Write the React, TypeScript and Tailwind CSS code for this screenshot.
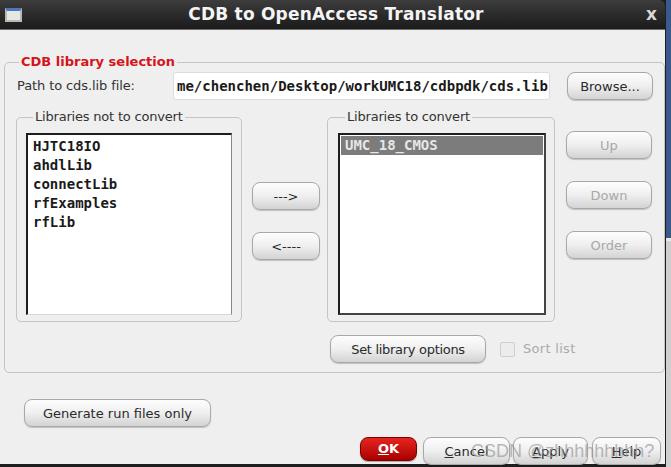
import React from 'react';

const Btn: React.FC<{ children: React.ReactNode; className?: string; disabled?: boolean }> = ({
    children,
    className = '',
    disabled,
}) => (
    <button
        className={`h-[28px] shrink-0 rounded-[8px] border border-[#a8a8a8] bg-linear-to-b from-[#fdfdfd] via-[#efefef] to-[#d3d3d3] shadow-[0_1px_1px_rgba(0,0,0,0.2)] text-[13px] leading-none ${disabled ? 'text-[#a8a8a8]' : 'text-[#2a2a2a]'} ${className}`}
    >
        {children}
    </button>
);

const libsLeft = ['HJTC18IO', 'ahdlLib', 'connectLib', 'rfExamples', 'rfLib'];

export default function App() {
    return (
        <div className="flex h-[467px] w-[671px] overflow-hidden bg-[#c8c8c8] font-['DejaVu_Sans',sans-serif]">
            {/* Window */}
            <div className="flex h-[467px] w-[666px] shrink-0 flex-col border-r border-[#1e1e1e] bg-[#1e1e1e]">
                {/* Title bar */}
                <div className="relative flex h-[30px] shrink-0 items-center rounded-tr-[6px] border-b border-[#6b6b6b] bg-linear-to-b from-[#3d3d3d] to-[#1b1b1b]">
                    <div className="ml-[5px] h-[14px] w-[17px] border-2 border-[#b9b9b9] border-t-[3px] border-t-[#4a78c0] bg-[#e8e8e0]" />
                    <div className="flex-1 pl-[4px] text-center text-[17px] font-bold tracking-[0.2px] text-[#f4f4f4]">
                        CDB to OpenAccess Translator
                    </div>
                    <div className="mr-[8px] text-[17px] font-bold text-[#d8d8d8]">x</div>
                </div>

                {/* Body */}
                <div className="relative flex h-[434px] flex-col bg-[#efefef] px-[4px] pt-[24px] text-[13px] text-[#333]">
                    <fieldset className="w-[660px] rounded-[5px] border border-[#c4c4c4] px-[11px] pb-[9px]">
                        <legend className="ml-[3px] px-[2px] text-[13px] font-bold leading-[16px] text-[#d5141b]">
                            CDB library selection
                        </legend>

                        {/* Path row */}
                        <div className="mt-[2px] flex h-[28px] items-center">
                            <span className="w-[157px] shrink-0 pl-[1px] tracking-[-0.1px]">Path to cds.lib file:</span>
                            <div className="flex h-[28px] w-[377px] items-center rounded-[3px] border border-[#dcdcdc] bg-white pl-[3px] font-['DejaVu_Sans_Mono',monospace] text-[14px] font-bold text-[#1a1a1a]">
                                me/chenchen/Desktop/workUMC18/cdbpdk/cds.lib
                            </div>
                            <Btn className="ml-[17px] w-[86px]">Browse...</Btn>
                        </div>

                        {/* Lists row */}
                        <div className="mt-[9px] flex">
                            <fieldset className="w-[226px] shrink-0 rounded-[5px] border border-[#c4c4c4] pl-[9px] pr-[9px] pb-[6px] pt-[8px]">
                                <legend className="ml-[7px] px-[2px] text-[13px] leading-[16px] tracking-[-0.2px]">
                                    Libraries not to convert
                                </legend>
                                <div className="h-[182px] border-t-2 border-l-2 border-r border-b border-t-[#1e1e1e] border-l-[#1e1e1e] border-r-[#888] border-b-[#d8d8d8] bg-white pl-[5px] pt-[2px] font-['DejaVu_Sans_Mono',monospace] text-[14px] font-bold leading-[19px] text-[#1a1a1a]">
                                    {libsLeft.map((l) => (
                                        <div key={l}>{l}</div>
                                    ))}
                                </div>
                            </fieldset>

                            <div className="ml-[10px] flex w-[68px] shrink-0 flex-col gap-[22px] pt-[73px]">
                                <Btn className="w-[68px] text-[11px]">---&gt;</Btn>
                                <Btn className="w-[68px] text-[11px]">&lt;----</Btn>
                            </div>

                            <fieldset className="ml-[7px] w-[228px] shrink-0 rounded-[5px] border border-[#c4c4c4] pl-[10px] pr-[8px] pb-[6px] pt-[8px]">
                                <legend className="ml-[7px] px-[2px] text-[13px] leading-[16px] tracking-[-0.2px]">
                                    Libraries to convert
                                </legend>
                                <div className="h-[182px] border-2 border-[#1e1e1e] border-r-[#444] border-b-[#444] bg-white p-[1px] font-['DejaVu_Sans_Mono',monospace] text-[14px] font-bold leading-[19px]">
                                    <div className="bg-[#7c7c7c] pl-[4px] text-[#e6e6e6]">UMC_18_CMOS</div>
                                </div>
                            </fieldset>

                            <div className="ml-[11px] flex flex-col gap-[22px] pt-[22px]">
                                <Btn disabled className="w-[86px]">Up</Btn>
                                <Btn disabled className="w-[86px]">Down</Btn>
                                <Btn disabled className="w-[86px]">Order</Btn>
                            </div>
                        </div>

                        {/* Options row */}
                        <div className="mt-[13px] flex items-center">
                            <Btn className="ml-[314px] w-[156px] tracking-[-0.3px]">Set library options</Btn>
                            <div className="ml-[14px] h-[15px] w-[15px] rounded-[2px] border border-[#cfcfcf] bg-[#ececec]" />
                            <span className="ml-[8px] tracking-[0.3px] text-[#aaa]">Sort list</span>
                        </div>
                    </fieldset>

                    <Btn className="ml-[20px] mt-[26px] w-[187px]">Generate run files only</Btn>

                    {/* Bottom buttons */}
                    <div className="mt-[10px] flex items-start">
                        <button className="ml-[356px] h-[24px] w-[59px] rounded-[8px] border border-[#7a0000] bg-linear-to-b from-[#e8231f] to-[#a80000] text-[13px] font-bold text-white shadow-[0_1px_1px_rgba(0,0,0,0.3)]">
                            <span className="underline">O</span>K
                        </button>
                        <Btn className="ml-[6px] h-[24px] w-[87px]">
                            <span className="underline">C</span>ancel
                        </Btn>
                        <Btn className="ml-[3px] h-[24px] w-[75px]">
                            <span className="underline">A</span>pply
                        </Btn>
                        <Btn className="ml-[4px] h-[24px] w-[69px]">
                            <span className="underline">H</span>elp
                        </Btn>
                    </div>

                    {/* Watermark */}
                    <div className="pointer-events-none absolute left-[471px] top-[408px] whitespace-nowrap font-['Liberation_Sans',sans-serif] text-[18px] text-[#9a9a9a]/70">
                        CSDN @zhhhhhhhhh?
                    </div>
                </div>
            </div>

            {/* Desktop strip */}
            <div className="flex w-[5px] flex-col">
                <div className="h-[238px] bg-[#3a5a8a]" />
                <div className="h-[3px] bg-[#eaeaea]" />
                <div className="flex-1 bg-[#cfcfcf]" />
            </div>
        </div>
    );
}
